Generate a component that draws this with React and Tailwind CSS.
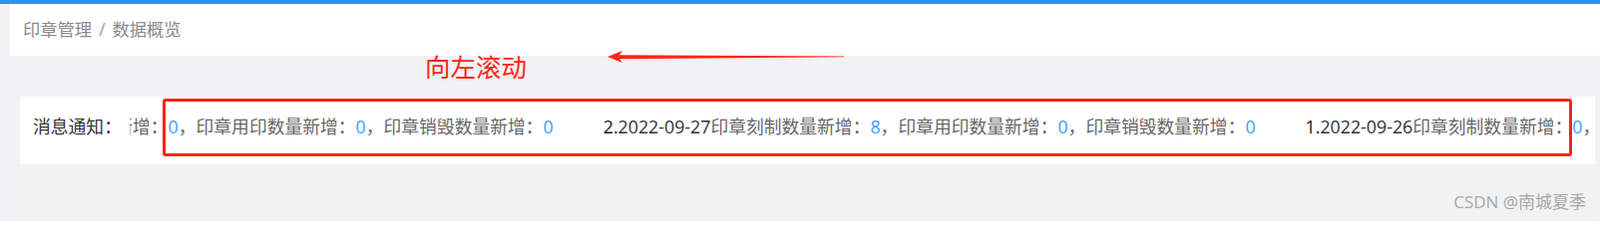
const font = { fontFamily: '"Open Sans", "Noto Sans CJK SC", "Noto Sans", sans-serif' }

const notices = [
  { idx: 3, date: '2022-09-28', carve: 0, use: 0, destroy: 0 },
  { idx: 2, date: '2022-09-27', carve: 8, use: 0, destroy: 0 },
  { idx: 1, date: '2022-09-26', carve: 0, use: 0, destroy: 0 },
]

const Num = ({ v }) => <span className="text-[#409eff]">{v}</span>

const NoticeItem = ({ n }) => (
  <span className="shrink-0 whitespace-nowrap mr-[50px] text-[#666]">
    <span className="text-[#1a1a1a]">{n.idx}.</span>
    <span className="text-[#333]">{n.date}</span>
    印章刻制数量新增：<Num v={n.carve} />，印章用印数量新增：<Num v={n.use} />，印章销毁数量新增：<Num v={n.destroy} />
  </span>
)

const Arrow = () => (
  <svg width="238" height="14" viewBox="0 0 238 14" className="block">
    <path d="M0 7 L15 1 L12 5.2 L237 6.4 L237 7.2 L12 9.2 L15 13 Z" fill="#ff2414" />
  </svg>
)

export default function App() {
  return (
    <div className="relative w-full h-[222px] overflow-hidden bg-[#f0f2f5] flex flex-col" style={font}>
      <div className="h-[4px] bg-[#2b94f6]" />

      <div className="ml-[10px] h-[52px] bg-white flex items-center pl-[13px] text-[17.3px] text-[#8a8a8a]">
        <span>印章管理</span>
        <span className="mx-[7px] text-[#9a9a9a]">/</span>
        <span>数据概览</span>
      </div>

      <div className="h-[41px] shrink-0" />

      <div className="ml-[20px] mr-[5px] h-[68px] shrink-0 bg-white flex items-center pb-[7px] pl-[13px] text-[17.8px]">
        <span className="shrink-0 text-[#333]">消息通知：</span>
        <div className="ml-[8px] flex-1 overflow-hidden">
          <div className="flex ml-[-229px]">
            {notices.map(n => <NoticeItem key={n.idx} n={n} />)}
          </div>
        </div>
      </div>

      <div className="ml-[20px] mr-[5px] flex-1 bg-[#f2f2f3]" />

      {/* annotations */}
      <div className="absolute left-[163px] top-[99px] w-[1413px] h-[58px] border-[3px] border-[#ff2414] rounded-[3px]" />
      <div className="absolute left-[426px] top-[50px] text-[25.5px] leading-[34px] text-[#ff2414]">向左滚动</div>
      <div className="absolute left-[609px] top-[50px]"><Arrow /></div>
      <div className="absolute right-[14px] top-[191px] text-[17px] leading-[24px] text-[#a8a8a8]">CSDN @南城夏季</div>
    </div>
  )
}
